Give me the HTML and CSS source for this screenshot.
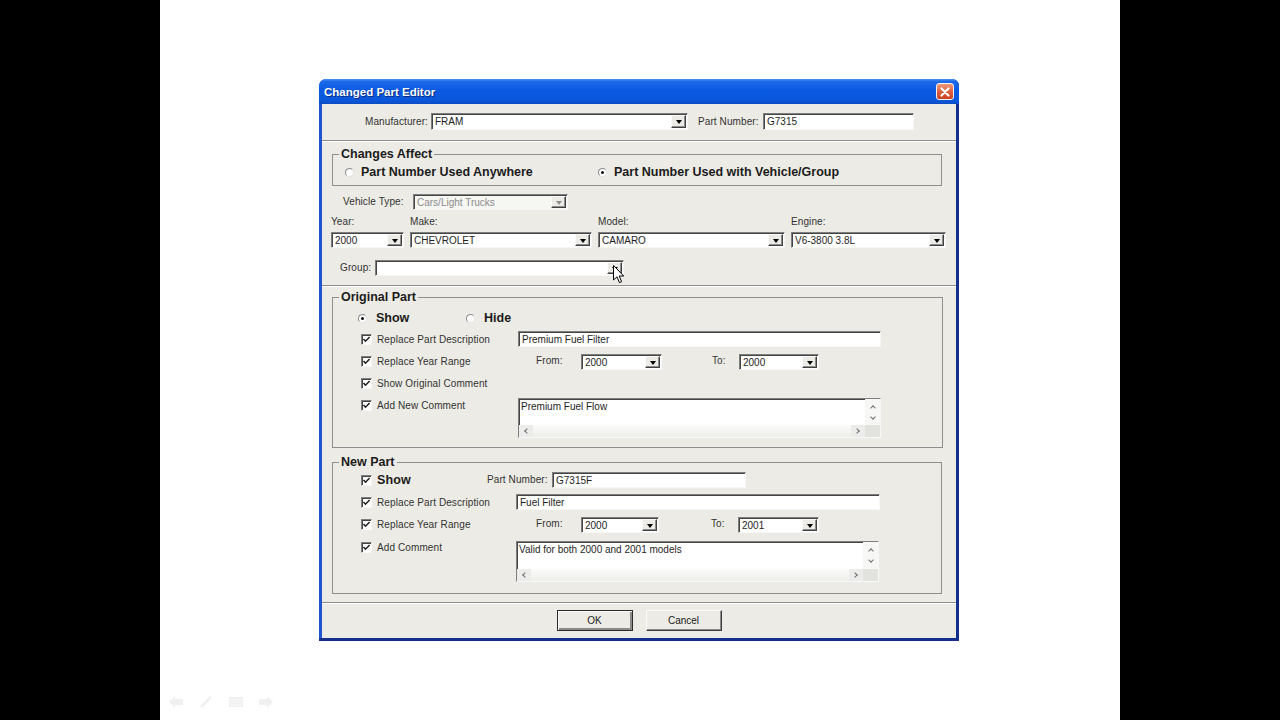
FILE: index.html
```html
<!DOCTYPE html>
<html lang="en">
<head>
    <meta charset="UTF-8">
    <meta name="viewport" content="width=device-width, initial-scale=1.0">
    <title>Changed Part Editor</title>
    <link rel="stylesheet" href="styles.css">
</head>
<body>
<div class="slide">
    <div class="window">
        <div class="titlebar">
            <span class="title">Changed Part Editor</span>
            <span class="close-btn">
                <svg width="10" height="10" viewBox="0 0 10 10"><path d="M1.5 1.5 L8.5 8.5 M8.5 1.5 L1.5 8.5" stroke="#fff" stroke-width="2.2" stroke-linecap="round"/></svg>
            </span>
        </div>

        <div class="client">
            <div class="row top-row">
                <span class="lbl lbl-manu">Manufacturer:</span>
                <div class="field combo manu"><span class="val">FRAM</span><span class="drop"></span></div>
                <span class="lbl lbl-pn">Part Number:</span>
                <div class="field edit pn">G7315</div>
            </div>
            <div class="sep"></div>

            <fieldset class="group affect">
                <legend>Changes Affect</legend>
                <div class="opts">
                    <span class="opt opt-any"><span class="radio"></span>Part Number Used Anywhere</span>
                    <span class="opt"><span class="radio on"></span>Part Number Used with Vehicle/Group</span>
                </div>
            </fieldset>

            <div class="row vtype-row">
                <span class="lbl lbl-vtype">Vehicle Type:</span>
                <div class="field combo off vtype"><span class="val">Cars/Light Trucks</span><span class="drop"></span></div>
            </div>

            <div class="vehicle-grid">
                <span class="lbl">Year:</span>
                <span class="lbl">Make:</span>
                <span class="lbl">Model:</span>
                <span class="lbl">Engine:</span>
                <div class="field combo"><span class="val">2000</span><span class="drop"></span></div>
                <div class="field combo"><span class="val">CHEVROLET</span><span class="drop"></span></div>
                <div class="field combo"><span class="val">CAMARO</span><span class="drop"></span></div>
                <div class="field combo"><span class="val">V6-3800 3.8L</span><span class="drop"></span></div>
            </div>

            <div class="row group-row">
                <span class="lbl lbl-group">Group:</span>
                <div class="field combo grp">
                    <span class="val"></span><span class="drop"></span>
                    <!-- mouse pointer resting on the drop button -->
                    <svg class="pointer" width="12" height="19" viewBox="0 0 12 19"><path d="M0.5 0.5 L0.5 15 L4 11.8 L6.4 17.6 L8.6 16.7 L6.2 11 L10.8 11 Z" fill="#fff" stroke="#000" stroke-width="1"/></svg>
                </div>
            </div>
            <div class="sep sep-2"></div>

            <fieldset class="group original">
                <legend>Original Part</legend>
                <div class="opts show-hide">
                    <span class="opt opt-show"><span class="radio on"></span>Show</span>
                    <span class="opt"><span class="radio"></span>Hide</span>
                </div>
                <div class="part-row">
                    <span class="cb"><span class="check"><svg width="9" height="9" viewBox="0 0 9 9"><path d="M1.5 4 L3.5 6.2 L7.6 2" fill="none" stroke="#222" stroke-width="1.6"/></svg></span>Replace Part Description</span>
                    <div class="field edit desc">Premium Fuel Filter</div>
                </div>
                <div class="part-row">
                    <span class="cb"><span class="check"><svg width="9" height="9" viewBox="0 0 9 9"><path d="M1.5 4 L3.5 6.2 L7.6 2" fill="none" stroke="#222" stroke-width="1.6"/></svg></span>Replace Year Range</span>
                    <span class="lbl lbl-from">From:</span>
                    <div class="field combo yr-from"><span class="val">2000</span><span class="drop"></span></div>
                    <span class="lbl lbl-to">To:</span>
                    <div class="field combo yr-to"><span class="val">2000</span><span class="drop"></span></div>
                </div>
                <div class="part-row">
                    <span class="cb"><span class="check"><svg width="9" height="9" viewBox="0 0 9 9"><path d="M1.5 4 L3.5 6.2 L7.6 2" fill="none" stroke="#222" stroke-width="1.6"/></svg></span>Show Original Comment</span>
                </div>
                <div class="part-row memo-row">
                    <span class="cb"><span class="check"><svg width="9" height="9" viewBox="0 0 9 9"><path d="M1.5 4 L3.5 6.2 L7.6 2" fill="none" stroke="#222" stroke-width="1.6"/></svg></span>Add New Comment</span>
                    <div class="field memo">
                        <div class="memo-main">
                            <div class="memo-text">Premium Fuel Flow</div>
                            <div class="vbar"><span class="chev up"></span><span class="chev down"></span></div>
                        </div>
                        <div class="hbar">
                            <span class="arrow-cell"><span class="chev left"></span></span>
                            <span class="hbar-track"></span>
                            <span class="arrow-cell"><span class="chev right"></span></span>
                            <span class="corner"></span>
                        </div>
                    </div>
                </div>
            </fieldset>

            <fieldset class="group newpart">
                <legend>New Part</legend>
                <div class="part-row show-row">
                    <span class="cb cb-show"><span class="check"><svg width="9" height="9" viewBox="0 0 9 9"><path d="M1.5 4 L3.5 6.2 L7.6 2" fill="none" stroke="#222" stroke-width="1.6"/></svg></span>Show</span>
                    <span class="lbl lbl-newpn">Part Number:</span>
                    <div class="field edit newpn">G7315F</div>
                </div>
                <div class="part-row">
                    <span class="cb"><span class="check"><svg width="9" height="9" viewBox="0 0 9 9"><path d="M1.5 4 L3.5 6.2 L7.6 2" fill="none" stroke="#222" stroke-width="1.6"/></svg></span>Replace Part Description</span>
                    <div class="field edit desc">Fuel Filter</div>
                </div>
                <div class="part-row">
                    <span class="cb"><span class="check"><svg width="9" height="9" viewBox="0 0 9 9"><path d="M1.5 4 L3.5 6.2 L7.6 2" fill="none" stroke="#222" stroke-width="1.6"/></svg></span>Replace Year Range</span>
                    <span class="lbl lbl-from">From:</span>
                    <div class="field combo yr-from"><span class="val">2000</span><span class="drop"></span></div>
                    <span class="lbl lbl-to">To:</span>
                    <div class="field combo yr-to"><span class="val">2001</span><span class="drop"></span></div>
                </div>
                <div class="part-row memo-row">
                    <span class="cb"><span class="check"><svg width="9" height="9" viewBox="0 0 9 9"><path d="M1.5 4 L3.5 6.2 L7.6 2" fill="none" stroke="#222" stroke-width="1.6"/></svg></span>Add Comment</span>
                    <div class="field memo">
                        <div class="memo-main">
                            <div class="memo-text">Valid for both 2000 and 2001 models</div>
                            <div class="vbar"><span class="chev up"></span><span class="chev down"></span></div>
                        </div>
                        <div class="hbar">
                            <span class="arrow-cell"><span class="chev left"></span></span>
                            <span class="hbar-track"></span>
                            <span class="arrow-cell"><span class="chev right"></span></span>
                            <span class="corner"></span>
                        </div>
                    </div>
                </div>
            </fieldset>

            <div class="sep sep-3"></div>
            <div class="buttons">
                <span class="btn default">OK</span>
                <span class="btn">Cancel</span>
            </div>
        </div>
    </div>

    <!-- slide navigation (faint) -->
    <div class="slide-nav">
        <svg width="16" height="14" viewBox="0 0 16 14"><path d="M1 7 L7 1 L7 4 L15 4 L15 10 L7 10 L7 13 Z" fill="#f0f0f0"/></svg>
        <svg width="16" height="14" viewBox="0 0 16 14"><path d="M3 12 L13 2" stroke="#f0f0f0" stroke-width="2.5"/></svg>
        <svg width="16" height="14" viewBox="0 0 16 14"><rect x="1" y="2" width="14" height="10" fill="#f0f0f0"/><path d="M3 5 H13 M3 7.5 H13 M3 10 H13" stroke="#fafafa" stroke-width="1"/></svg>
        <svg width="16" height="14" viewBox="0 0 16 14"><path d="M15 7 L9 1 L9 4 L1 4 L1 10 L9 10 L9 13 Z" fill="#f0f0f0"/></svg>
    </div>
</div>
</body>
</html>
```

FILE: styles.css
```css
* {
    box-sizing: border-box;
}
body {
    margin: 0;
    background-color: #000;
    font-family: "Liberation Sans", Arial, sans-serif;
}
.slide {
    position: relative;
    width: 960px;
    height: 720px;
    margin: 0 auto;
    background-color: #fff;
    display: flex;
    justify-content: center;
    align-items: center;
}

/* window frame */
.window {
    width: 640px;
    height: 562px;
    margin-right: 2px;
    display: flex;
    flex-direction: column;
    background-color: #1f55d0;
    border-radius: 7px 7px 0 0;
    overflow: hidden;
    box-shadow: inset -3px -3px 0 #142f8c;
}
.titlebar {
    position: relative;
    height: 25px;
    flex: none;
    display: flex;
    align-items: center;
    padding-left: 5px;
    background: linear-gradient(#4a93f5 0%, #1d6ae9 10%, #0a5ae2 45%, #0b57db 85%, #0c4cc4 100%);
}
.title {
    color: #fff;
    font-size: 11.5px;
    font-weight: bold;
    text-shadow: 1px 1px 0 #0b2a80;
}
.close-btn {
    position: absolute;
    top: 4px;
    right: 5px;
    width: 18px;
    height: 17px;
    display: flex;
    align-items: center;
    justify-content: center;
    border: 1px solid #f4f4f4;
    border-radius: 3px;
    background: linear-gradient(#ee9a7d, #dc5c3b 55%, #c94425);
}
.client {
    flex: 1;
    margin: 0 3px 3px;
    background-color: #ecebe5;
}

/* common controls */
.lbl {
    font-size: 10px;
    line-height: 12px;
    letter-spacing: 0.1px;
    color: #333;
    white-space: nowrap;
}
.row {
    display: flex;
    align-items: center;
}
.field {
    background-color: #fff;
    border: 1px solid;
    border-color: #7e7e7e #f7f7f7 #f7f7f7 #7e7e7e;
    box-shadow: inset 1px 1px 0 #454545;
    font-size: 10px;
    color: #1e1e1e;
}
.edit {
    height: 16px;
    line-height: 15px;
    padding-left: 3px;
}
.combo {
    position: relative;
    display: flex;
    height: 16px;
}
.combo .val {
    flex: 1;
    padding-left: 3px;
    line-height: 15px;
    overflow: hidden;
    white-space: nowrap;
}
.drop {
    width: 15px;
    margin: 1px 1px 1px 0;
    display: flex;
    align-items: center;
    justify-content: center;
    background-color: #ecebe5;
    border: 1px solid;
    border-color: #fafafa #404040 #404040 #fafafa;
    box-shadow: inset -1px -1px 0 #8d8d8d;
}
.drop::after {
    content: "";
    border-left: 3.5px solid transparent;
    border-right: 3.5px solid transparent;
    border-top: 4px solid #000;
    margin-top: 1px;
}
.combo.off {
    background-color: #f6f6f3;
}
.combo.off .val {
    color: #8c8c8c;
}
.combo.off .drop::after {
    border-top-color: #8c8c8c;
}
.sep {
    height: 2px;
    border-top: 1px solid #8d8d8d;
    border-bottom: 1px solid #fff;
}
.group {
    min-width: 0;
    margin: 0 0 0 10px;
    padding: 0;
    border: 1px solid #8f8f8f;
}
.group legend {
    margin-left: 6px;
    padding: 0 2px;
    font-size: 12.5px;
    line-height: 15px;
    font-weight: bold;
    color: #1c1c1c;
}
.opts {
    display: flex;
    align-items: center;
}
.opt {
    display: flex;
    align-items: center;
    font-size: 12.5px;
    font-weight: bold;
    color: #1c1c1c;
    white-space: nowrap;
}
.radio {
    position: relative;
    width: 9px;
    height: 9px;
    margin-right: 7px;
    border-radius: 50%;
    background-color: #fff;
    border: 1px solid;
    border-color: #8a8a8a #e2e2e2 #e2e2e2 #8a8a8a;
}
.radio.on::after {
    content: "";
    position: absolute;
    left: 2px;
    top: 2px;
    width: 3px;
    height: 3px;
    border-radius: 50%;
    background-color: #111;
}
.check {
    width: 11px;
    height: 11px;
    margin-right: 5px;
    flex: none;
    display: flex;
    align-items: center;
    justify-content: center;
    background-color: #fff;
    border: 1px solid;
    border-color: #7e7e7e #f7f7f7 #f7f7f7 #7e7e7e;
    box-shadow: inset 1px 1px 0 #454545;
}
.cb {
    display: flex;
    align-items: center;
    height: 12px;
    font-size: 10px;
    letter-spacing: 0.1px;
    color: #333;
    white-space: nowrap;
}

/* header rows */
.top-row {
    margin-top: 9px;
    height: 17px;
    padding-left: 43px;
}
.lbl-manu {
    width: 61px;
    margin-right: 5px;
    text-align: right;
}
.manu {
    width: 257px;
    height: 17px;
}
.lbl-pn {
    width: 60px;
    margin: 0 5px 0 10px;
}
.pn {
    width: 151px;
    height: 17px;
}
.top-row + .sep {
    margin-top: 10px;
}

.affect {
    width: 610px;
    margin-top: 5px;
    padding: 3px 0 6px;
}
.affect .opts {
    height: 14px;
    padding-left: 12px;
}
.opt-any {
    width: 253px;
}

.vtype-row {
    margin-top: 8px;
    height: 16px;
    padding-left: 21px;
}
.lbl-vtype {
    width: 62px;
    margin-right: 8px;
}
.vtype {
    width: 155px;
}

.vehicle-grid {
    display: grid;
    grid-template-columns: 73px 182px 187px 155px;
    column-gap: 6px;
    row-gap: 4px;
    margin-top: 6px;
    padding-left: 9px;
}

.group-row {
    margin-top: 12px;
    height: 16px;
    padding-left: 18px;
}
.lbl-group {
    width: 30px;
    margin-right: 5px;
}
.grp {
    width: 249px;
}
.pointer {
    position: absolute;
    left: 237px;
    top: 4px;
}
.sep-2 {
    margin-top: 9px;
}

/* part sections */
.original {
    width: 611px;
    margin-top: 3px;
    padding: 5px 0 9px;
}
.show-hide {
    height: 16px;
    padding-left: 25px;
}
.show-hide .radio {
    margin-right: 9px;
}
.opt-show {
    width: 108px;
}
.part-row {
    display: flex;
    align-items: center;
    height: 22px;
    padding-left: 28px;
}
.original .show-hide + .part-row {
    margin-top: 2px;
}
.original .cb {
    width: 157px;
}
.desc {
    width: 363px;
}
.lbl-from {
    width: 45px;
    margin-left: 18px;
}
.yr-from {
    width: 81px;
    margin-top: 2px;
}
.lbl-to {
    width: 27px;
    margin-left: 50px;
}
.yr-to {
    width: 80px;
    margin-top: 2px;
}
.memo-row {
    align-items: flex-start;
    height: 44px;
}
.memo-row .cb {
    margin-top: 5px;
}
.memo {
    width: 363px;
    height: 40px;
    margin-top: 4px;
    display: flex;
    flex-direction: column;
}
.memo-main {
    flex: 1;
    display: flex;
}
.memo-text {
    flex: 1;
    padding: 2px 2px 0;
    line-height: 12px;
}
.vbar {
    width: 15px;
    display: flex;
    flex-direction: column;
    align-items: center;
    gap: 7px;
    padding-top: 6px;
    background-color: #f7f7f5;
}
.hbar {
    height: 12px;
    display: flex;
    align-items: center;
    background: linear-gradient(#fbfbfa, #eeeeeb);
}
.arrow-cell {
    width: 14px;
    height: 100%;
    display: flex;
    align-items: center;
    justify-content: center;
    background-color: #ececea;
}
.hbar-track {
    flex: 1;
}
.corner {
    width: 15px;
    height: 100%;
    background-color: #e2e2df;
}
.chev {
    width: 4px;
    height: 4px;
    border-top: 1px solid #6e6e6e;
    border-left: 1px solid #6e6e6e;
}
.chev.up {
    transform: translateY(1px) rotate(45deg);
}
.chev.down {
    transform: translateY(-1px) rotate(225deg);
}
.chev.left {
    transform: translateX(1px) rotate(-45deg);
}
.chev.right {
    transform: translateX(-1px) rotate(135deg);
}

.newpart {
    width: 610px;
    margin-top: 7px;
    padding: 2px 0 11px;
}
.show-row {
    height: 16px;
}
.newpart .cb {
    width: 155px;
}
.newpart .cb-show {
    width: 126px;
    font-size: 12.5px;
    font-weight: bold;
    color: #1c1c1c;
}
.lbl-newpn {
    width: 60px;
    margin-right: 5px;
}
.newpn {
    width: 194px;
}
.newpart .show-row + .part-row {
    margin-top: 3px;
}
.newpart .desc {
    width: 364px;
}
.newpart .lbl-from {
    margin-left: 20px;
}
.newpart .yr-from {
    width: 78px;
}
.newpart .lbl-to {
    margin-left: 52px;
}
.newpart .yr-to {
    width: 81px;
}
.newpart .memo-row {
    height: 47px;
}
.newpart .memo-row .cb {
    margin-top: 6px;
}
.newpart .memo {
    width: 363px;
    height: 41px;
    margin-top: 6px;
}

/* buttons */
.sep-3 {
    margin-top: 8px;
}
.buttons {
    display: flex;
    justify-content: center;
    gap: 13px;
    margin-top: 6px;
}
.btn {
    width: 76px;
    height: 21px;
    display: flex;
    align-items: center;
    justify-content: center;
    font-size: 10px;
    color: #222;
    background-color: #ecebe5;
    border: 1px solid;
    border-color: #fbfbfb #3c3c3c #3c3c3c #fbfbfb;
    box-shadow: inset -1px -1px 0 #8b8b8b;
}
.btn.default {
    border-color: #2a2a2a;
    box-shadow: inset 1px 1px 0 #fbfbfb, inset -2px -2px 0 #8b8b8b;
}

.slide-nav {
    position: absolute;
    left: 8px;
    bottom: 11px;
    display: flex;
    gap: 14px;
}
```
